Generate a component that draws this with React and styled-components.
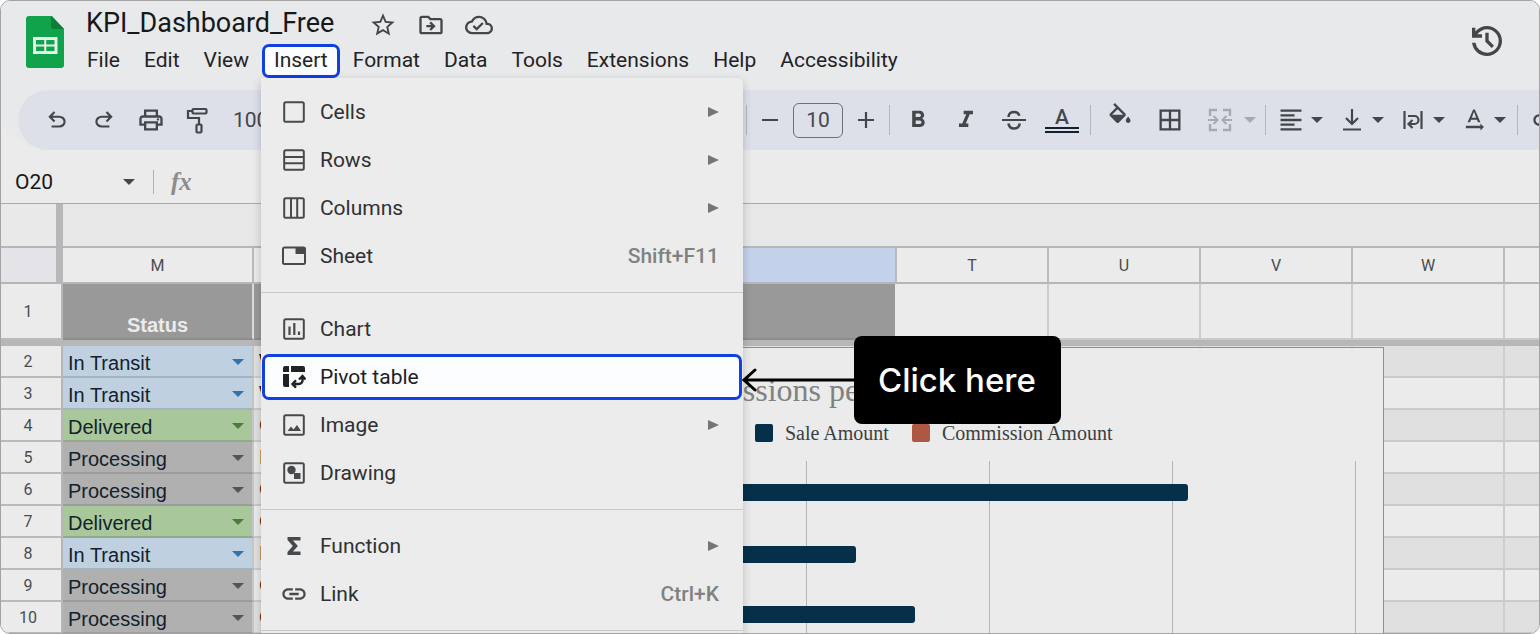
import React from 'react';
import styled, { createGlobalStyle, css } from 'styled-components';
import {
  MdStarBorder,
  MdOutlineDriveFileMove,
  MdOutlineCloudDone,
  MdOutlinePrint,
  MdFormatBold,
  MdFormatItalic,
  MdBorderAll,
  MdFormatAlignLeft,
  MdTextRotationNone,
  MdLink,
} from 'react-icons/md';

const MENUS = ['File', 'Edit', 'View', 'Insert', 'Format', 'Data', 'Tools', 'Extensions', 'Help', 'Accessibility'];

const ROWS = [
  { status: 'In Transit', next: 'W' },
  { status: 'In Transit', next: 'W' },
  { status: 'Delivered', next: 'C' },
  { status: 'Processing', next: 'F' },
  { status: 'Processing', next: 'C' },
  { status: 'Delivered', next: 'C' },
  { status: 'In Transit', next: 'L' },
  { status: 'Processing', next: 'C' },
  { status: 'Processing', next: 'C' },
];

const STATUS_COLORS = {
  'In Transit': { fill: '#bfd1e0', line: '#a5b3bf', arrow: '#2f72ad' },
  Delivered: { fill: '#a8c89c', line: '#94a88c', arrow: '#4c7a3c' },
  Processing: { fill: '#b0b0b0', line: '#9c9c9c', arrow: '#545454' },
};

const SALES = [
  { top: 23, length: 888 },
  { top: 85, length: 556 },
  { top: 145, length: 615 },
];

const GRID_LINES = [506, 689, 872, 1055];

/* icons */

const Icon = ({ w = 28, h = w, box = `0 0 ${w} ${h}`, children }) => (
  <svg width={w} height={h} viewBox={box} fill="none" stroke="currentColor" strokeWidth="2" aria-hidden="true">
    {children}
  </svg>
);

const SheetsLogo = () => (
  <svg width="38" height="52" viewBox="0 0 38 52" aria-hidden="true">
    <path d="M3 0h23l12 13v36a3 3 0 0 1-3 3H3a3 3 0 0 1-3-3V3a3 3 0 0 1 3-3z" fill="#10a34b" />
    <path d="M25 0l13 13H28a3 3 0 0 1-3-3z" fill="#0b7f38" />
    <path d="M8.500 22.500h21.500v14h-21.500z" fill="none" stroke="#e8f0ea" strokeWidth="3" />
    <path d="M19.250 22v15M8 29.500h22.500" fill="none" stroke="#e8f0ea" strokeWidth="2" />
  </svg>
);

const UndoIcon = () => (
  <Icon w={26} box="0 0 24 24">
    <path fill="currentColor" stroke="none" d="M7 19v-2h7.100q1.575 0 2.738-1T18 13.500 16.838 11 14.100 10H7.800l2.600 2.600L9 14 4 9l5-5 1.400 1.400L7.800 8h6.300q2.425 0 4.163 1.575T20 13.500t-1.737 3.925T14.100 19z" />
  </Icon>
);

const RedoIcon = () => (
  <Icon w={26} box="0 0 24 24">
    <path fill="currentColor" stroke="none" transform="translate(24 0) scale(-1 1)" d="M7 19v-2h7.100q1.575 0 2.738-1T18 13.500 16.838 11 14.100 10H7.800l2.600 2.600L9 14 4 9l5-5 1.400 1.400L7.800 8h6.300q2.425 0 4.163 1.575T20 13.500t-1.737 3.925T14.100 19z" />
  </Icon>
);

const HistoryIcon = () => (
  <Icon w={40} box="0 0 24 24">
    <path fill="currentColor" stroke="none" d="M12 21q-3.450 0-6.012-2.287T3.050 13H5.100q.35 2.600 2.313 4.300T12 19q2.925 0 4.963-2.037T19 12t-2.037-4.963T12 5q-1.725 0-3.225.8T6.250 8H9v2H3V4h2v2.350q1.275-1.600 3.113-2.475T12 3q1.875 0 3.513.713t2.850 1.924 1.925 2.850T21 12t-.712 3.513-1.925 2.850-2.850 1.925T12 21m2.800-4.800L11 12.400V7h2v4.600l3.200 3.200z" />
  </Icon>
);

const PaintIcon = () => (
  <Icon>
    <rect x="8.500" y="3" width="14" height="4.500" rx="1" strokeWidth="2.200" />
    <path d="M8 5H4v7h11v6" strokeWidth="2.200" />
    <rect x="12.500" y="18.500" width="5" height="8" rx="1" strokeWidth="2.200" />
  </Icon>
);

const MinusIcon = () => (
  <Icon w={16}>
    <path d="M0 8h16" strokeWidth="2.200" />
  </Icon>
);

const PlusIcon = () => (
  <Icon w={16}>
    <path d="M0 8h16M8 0v16" strokeWidth="2.200" />
  </Icon>
);

const StrikeIcon = () => (
  <Icon w={24} h={22}>
    <path d="M0 11h24" strokeWidth="2.200" />
    <path d="M6.500 8C6.500 4.500 9 3 12 3s4.800 1.500 5.300 3.800M6.500 14.500C7 18 9 19.500 12 19.500s5.800-1.600 5.500-5" strokeWidth="2.600" />
  </Icon>
);

const FillIcon = () => (
  <Icon w={28} h={34} box="0 0 24 29">
    <path fill="currentColor" stroke="none" d="M16.560 8.940 7.620 0 6.210 1.410l2.380 2.380-5.150 5.150a1.490 1.490 0 0 0 0 2.120l5.500 5.500c.29.29.68.44 1.060.44s.77-.15 1.060-.44l5.500-5.500c.59-.58.59-1.530 0-2.120zM5.210 10 10 5.210 14.790 10H5.210zM19 11.500s-2 2.170-2 3.500c0 1.100.9 2 2 2s2-.9 2-2c0-1.330-2-3.500-2-3.500z" />
  </Icon>
);

const MergeIcon = () => (
  <Icon>
    <path d="M4 10V4h7M17 4h7v6M4 18v6h7M17 24h7v-6" strokeWidth="2.400" />
    <path d="M2 14h9M7.500 10l4 4-4 4M26 14h-9M20.500 10l-4 4 4 4" />
  </Icon>
);

const BottomIcon = () => (
  <Icon>
    <path d="M14 3v14M8 12l6 6 6-6M5 23.500h18" strokeWidth="2.200" />
  </Icon>
);

const WrapIcon = () => (
  <Icon>
    <path d="M5.500 5v18M22.500 5v18" strokeWidth="2.200" />
    <path d="M9 10h6.500a4 4 0 0 1 0 8H10M13.500 14l-4 4 4 4" strokeWidth="2.200" />
  </Icon>
);

const Caret = ({ size = 12 }) => (
  <svg width={size} height="6" viewBox="0 0 12 6" aria-hidden="true">
    <path d="M0 0h12L6 6z" fill="currentColor" />
  </svg>
);

const SubmenuArrow = () => (
  <svg width="11" height="10" viewBox="0 0 11 10" aria-hidden="true">
    <path d="M0 0l11 5-11 5z" fill="#757575" />
  </svg>
);

const CellsIcon = () => (
  <Icon w={24}>
    <rect x="2.200" y="2.200" width="19.600" height="19.600" rx="1.500" />
  </Icon>
);

const RowsIcon = () => (
  <Icon w={24}>
    <rect x="2.200" y="2.200" width="19.600" height="19.600" rx="1.500" />
    <path d="M2 9h20M2 15.200h20" />
  </Icon>
);

const ColumnsIcon = () => (
  <Icon w={24}>
    <rect x="2.200" y="2.200" width="19.600" height="19.600" rx="1.500" />
    <path d="M9 2v20M15.200 2v20" />
  </Icon>
);

const SheetIcon = () => (
  <Icon w={24}>
    <rect x="1" y="3.500" width="22" height="16.500" rx="1.500" />
    <path d="M13.500 3h9v7h-9z" fill="currentColor" stroke="none" />
  </Icon>
);

const ChartIcon = () => (
  <Icon w={24}>
    <rect x="2.200" y="2.200" width="19.600" height="19.600" rx="1.500" />
    <path d="M7.500 9.500V18M12.300 6v12M17 14.500V18" strokeWidth="2.200" />
  </Icon>
);

const PivotIcon = () => (
  <Icon w={24}>
    <path d="M3 1h4v6H1V3a2 2 0 0 1 2-2zM9 1h12a2 2 0 0 1 2 2v4H9zM1 9h6v13H3a2 2 0 0 1-2-2z" fill="currentColor" stroke="none" />
    <path d="M11 19h6a3.500 3.500 0 0 0 3.500-3.500V12M14 15.200L10.500 19l3.500 3.600M17 14.500l3.500-3.500 3 3.500" strokeWidth="2.400" />
  </Icon>
);

const ImageIcon = () => (
  <Icon w={24}>
    <rect x="2.200" y="2.200" width="19.600" height="19.600" rx="1.500" />
    <path d="M5.500 18l3.500-4.500 2.500 3 3.500-4.500 4 6z" fill="currentColor" stroke="none" />
  </Icon>
);

const DrawingIcon = () => (
  <Icon w={24}>
    <rect x="2.200" y="2.200" width="19.600" height="19.600" rx="1.500" />
    <circle cx="9.500" cy="9" r="4.200" fill="currentColor" stroke="none" />
    <path d="M12 12h6.500v6H12z" fill="currentColor" stroke="none" />
  </Icon>
);

const FunctionIcon = () => (
  <Icon w={24}>
    <path d="M5.500 3h13v3.600h-7.600l5 5.400-5 5.400h7.600V21h-13v-3l5.300-6-5.300-6z" fill="currentColor" stroke="none" />
  </Icon>
);

/* insert menu */

const SECTIONS = [
  [
    { label: 'Cells', icon: <CellsIcon />, submenu: true },
    { label: 'Rows', icon: <RowsIcon />, submenu: true },
    { label: 'Columns', icon: <ColumnsIcon />, submenu: true },
    { label: 'Sheet', icon: <SheetIcon />, shortcut: 'Shift+F11' },
  ],
  [
    { label: 'Chart', icon: <ChartIcon /> },
    { label: 'Pivot table', icon: <PivotIcon />, active: true },
    { label: 'Image', icon: <ImageIcon />, submenu: true },
    { label: 'Drawing', icon: <DrawingIcon /> },
  ],
  [
    { label: 'Function', icon: <FunctionIcon />, submenu: true },
    { label: 'Link', icon: <MdLink size={28} />, shortcut: 'Ctrl+K' },
  ],
];

const ClickHere = () => (
  <Callout>
    <svg width="112" height="26" viewBox="0 0 112 26" fill="none" stroke="#000" strokeWidth="3" aria-hidden="true">
      <path d="M2 13h110M13 3L2 13l11 10" strokeLinecap="round" />
    </svg>
    <CalloutLabel>Click here</CalloutLabel>
  </Callout>
);

const InsertMenu = () => (
  <Dropdown role="menu">
    {SECTIONS.map((items) => (
      <Section key={items[0].label}>
        {items.map((item) => (
          <ItemSlot key={item.label}>
            <MenuItem role="menuitem" $active={item.active}>
              <MenuIcon $active={item.active}>{item.icon}</MenuIcon>
              <MenuLabel>{item.label}</MenuLabel>
              {item.shortcut && <Shortcut>{item.shortcut}</Shortcut>}
              {item.submenu && <SubmenuArrow />}
            </MenuItem>
            {item.active && <ClickHere />}
          </ItemSlot>
        ))}
      </Section>
    ))}
  </Dropdown>
);

const TopBar = () => (
  <Header>
    <SheetsLogo />
    <Titles>
      <TitleRow>
        <Title>KPI_Dashboard_Free</Title>
        <TitleActions>
          <TitleButton aria-label="Star"><MdStarBorder size={28} /></TitleButton>
          <TitleButton aria-label="Move"><MdOutlineDriveFileMove size={28} /></TitleButton>
          <TitleButton aria-label="Saved to Drive"><MdOutlineCloudDone size={28} /></TitleButton>
        </TitleActions>
      </TitleRow>
      <MenuBar>
        {MENUS.map((name) => (
          <MenuSlot key={name}>
            <MenuButton $open={name === 'Insert'}>{name}</MenuButton>
            {name === 'Insert' && <InsertMenu />}
          </MenuSlot>
        ))}
      </MenuBar>
    </Titles>
    <HistoryButton aria-label="Version history"><HistoryIcon /></HistoryButton>
  </Header>
);

const Toolbar = () => (
  <ToolbarWrapper>
    <ToolGroup>
      <Tool $width={47} aria-label="Undo"><UndoIcon /></Tool>
      <Tool $width={47} aria-label="Redo"><RedoIcon /></Tool>
      <Tool $width={47} aria-label="Print"><MdOutlinePrint size={28} /></Tool>
      <Tool $width={47} aria-label="Paint format"><PaintIcon /></Tool>
      <Zoom>100%</Zoom>
    </ToolGroup>
    <Separator />
    <Tool $width={46} aria-label="Decrease font size"><MinusIcon /></Tool>
    <FontSize aria-label="Font size" defaultValue="10" />
    <Tool $width={46} aria-label="Increase font size"><PlusIcon /></Tool>
    <Separator $after={4} />
    <Tool $width={48} aria-label="Bold"><MdFormatBold size={28} /></Tool>
    <Tool $width={48} aria-label="Italic"><MdFormatItalic size={28} /></Tool>
    <Tool $width={48} aria-label="Strikethrough"><StrikeIcon /></Tool>
    <Tool $width={48} aria-label="Text color"><TextColor>A</TextColor></Tool>
    <Separator $before={4} $after={4} />
    <Tool $width={50} aria-label="Fill color"><FillIcon /></Tool>
    <Tool $width={50} aria-label="Borders"><MdBorderAll size={28} /></Tool>
    <DropTool $width={70} $gap={10} $faded aria-label="Merge cells"><MergeIcon /><Caret /></DropTool>
    <Separator />
    <DropTool $width={61} $gap={6} aria-label="Horizontal align"><MdFormatAlignLeft size={28} /><Caret /></DropTool>
    <DropTool $width={61} $gap={6} aria-label="Vertical align"><BottomIcon /><Caret /></DropTool>
    <DropTool $width={61} $gap={6} aria-label="Text wrapping"><WrapIcon /><Caret /></DropTool>
    <DropTool $width={61} $gap={6} aria-label="Text rotation"><MdTextRotationNone size={28} /><Caret /></DropTool>
    <Separator $before={7} $after={7} />
    <Tool $width={40} aria-label="Insert link"><MdLink size={28} /></Tool>
  </ToolbarWrapper>
);

const FormulaBar = () => (
  <FormulaWrapper>
    <NameBox aria-label="Name box" defaultValue="O20" />
    <NameBoxButton aria-label="Named ranges"><Caret /></NameBoxButton>
    <FormulaDivider />
    <Fx>fx</Fx>
    <FormulaInput aria-label="Formula" />
  </FormulaWrapper>
);

const SalesChart = () => (
  <ChartCard>
    <ChartTitle>Sales and Commissions per</ChartTitle>
    <Legend>
      <Swatch $color="#06304a" />
      <LegendText>Sale Amount</LegendText>
      <Swatch $color="#ae5742" />
      <LegendText>Commission Amount</LegendText>
    </Legend>
    <svg width="100%" height="240" aria-hidden="true">
      {GRID_LINES.map((x) => (
        <rect key={x} x={x - 1} y="0" width="1" height="240" fill="#b3b5b6" />
      ))}
      {SALES.map((bar) => (
        <rect key={bar.top} x="-4" y={bar.top} width={bar.length + 3} height="17" rx="3" fill="#06304a" />
      ))}
    </svg>
  </ChartCard>
);

const Grid = () => (
  <GridWrapper>
    <GroupBand><BandCorner /></GroupBand>
    <Sheet>
      <colgroup>
        <Col $width={62} />
        <Col $width={191} />
        <Col $width={191} />
        <Col $width={452} />
        <Col $width={152} />
        <Col $width={152} />
        <Col $width={152} />
        <Col $width={152} />
        <col />
      </colgroup>
      <thead>
        <tr>
          <Corner />
          <ColHead>M</ColHead>
          <ColHead />
          <ColHead $selected />
          <ColHead>T</ColHead>
          <ColHead>U</ColHead>
          <ColHead>V</ColHead>
          <ColHead>W</ColHead>
          <ColHead />
        </tr>
      </thead>
      <tbody>
        <tr>
          <RowHead $tall>1</RowHead>
          <TitleCell>Status</TitleCell>
          <TitleCell />
          <TitleCell $last />
          <Cell />
          <Cell />
          <Cell />
          <Cell />
          <Cell />
        </tr>
        <tr>
          <FreezeLine colSpan={9} />
        </tr>
        {ROWS.map((row, i) => (
          <tr key={i}>
            <RowHead>{i + 2}</RowHead>
            <StatusCell $tone={STATUS_COLORS[row.status]}>
              <StatusInner>
                {row.status}
                <StatusButton aria-label="Change status" $tone={STATUS_COLORS[row.status]}><Caret /></StatusButton>
              </StatusInner>
            </StatusCell>
            <Cell $shaded={i % 2 === 0}>{row.next}</Cell>
            <Cell $shaded={i % 2 === 0} />
            <Cell $shaded={i % 2 === 0} />
            <Cell $shaded={i % 2 === 0} />
            <Cell $shaded={i % 2 === 0} />
            <Cell $shaded={i % 2 === 0} />
            <Cell $shaded={i % 2 === 0} />
          </tr>
        ))}
      </tbody>
    </Sheet>
    <SalesChart />
  </GridWrapper>
);

const App = () => (
  <>
    <GlobalStyle />
    <Window>
      <TopBar />
      <Toolbar />
      <FormulaBar />
      <Grid />
    </Window>
  </>
);

export default App;

const GlobalStyle = createGlobalStyle`
  * {
    box-sizing: border-box;
  }

  body {
    margin: 0;
    background: #fff;
    font-family: Roboto, "Liberation Sans", sans-serif;
    color: #1f2326;
  }

  button, input {
    font: inherit;
    color: inherit;
    margin: 0;
    padding: 0;
    border: 0;
    background: none;
  }

  svg {
    display: block;
    flex: none;
  }
`;

const Window = styled.div`
  display: flex;
  flex-direction: column;
  height: 100vh;
  overflow: hidden;
  border: 1px solid #a3a3a3;
  border-radius: 10px;
  background: #ebebeb;
`;

const Header = styled.header`
  position: relative;
  z-index: 2;
  display: flex;
  flex: none;
  height: 77px;
  padding: 0 32px 0 25px;
  background: #e8e9ea;

  > svg {
    margin-top: 15px;
  }
`;

const Titles = styled.div`
  flex: 1;
  margin-left: 12px;
`;

const TitleRow = styled.div`
  display: flex;
  align-items: center;
  height: 43px;
  padding-left: 10px;
`;

const Title = styled.h1`
  margin: 0;
  font-size: 27px;
  font-weight: 400;
  line-height: 36px;
  color: #16181a;
`;

const TitleActions = styled.div`
  display: flex;
  margin: 4px 0 0 25px;
  color: #43474a;
`;

const TitleButton = styled.button`
  display: flex;
  align-items: center;
  justify-content: center;
  width: 48px;
  height: 28px;
`;

const MenuBar = styled.nav`
  display: flex;
  gap: 2px;
`;

const MenuSlot = styled.div`
  position: relative;
`;

const MenuButton = styled.button`
  height: 34px;
  padding: 0 ${(p) => (p.$open ? 9 : 8)}px 2px;
  border: 3px solid ${(p) => (p.$open ? '#1240e0' : 'transparent')};
  border-radius: 7px;
  background: ${(p) => (p.$open ? '#fcfdfe' : 'transparent')};
  font-size: 21px;
  line-height: 26px;
`;

const HistoryButton = styled.button`
  align-self: flex-start;
  margin-top: 20px;
  color: #43474a;
`;

const Dropdown = styled.div`
  position: absolute;
  top: 34px;
  left: -1px;
  width: 482px;
  padding-top: 10px;
  border-radius: 0 5px 5px 5px;
  background: #ececec;
  box-shadow: 0 3px 10px rgba(0, 0, 0, 0.2);
`;

const Section = styled.div`
  padding-bottom: 12px;
  border-bottom: 1px solid #c6c9c9;

  & + & {
    padding-top: 12px;
  }

  &:last-child {
    padding-bottom: 20px;
    border-bottom: 0;
    background: linear-gradient(#c6c9c9, #c6c9c9) 0 calc(100% - 7px) / 100% 1px no-repeat;
  }
`;

const ItemSlot = styled.div`
  position: relative;
  padding: 1px;
`;

const MenuItem = styled.button`
  display: flex;
  align-items: center;
  width: 100%;
  height: 46px;
  padding: 0 20px 0 15px;
  border: 3px solid transparent;
  border-radius: 7px;
  font-size: 21px;
  color: #2f3133;

  ${(p) => p.$active && css`
    border-color: #1240e0;
    background: #fcfdfe;
    color: #202224;
  `}
`;

const MenuIcon = styled.span`
  display: flex;
  justify-content: center;
  width: 28px;
  margin-right: 12px;
  color: ${(p) => (p.$active ? '#202224' : '#474a4c')};
`;

const MenuLabel = styled.span`
  flex: 1;
  text-align: left;
`;

const Shortcut = styled.span`
  font-weight: 500;
  color: #808282;
`;

const Callout = styled.div`
  position: absolute;
  top: -17px;
  left: 481px;
  display: flex;
  align-items: center;
`;

const CalloutLabel = styled.div`
  padding: 22px 25px 22px 24px;
  border-radius: 8px;
  background: #000;
  color: #fff;
  font-family: Inter, "Liberation Sans", sans-serif;
  font-size: 33px;
  font-weight: 500;
  line-height: 44px;
  white-space: nowrap;
`;

const ToolbarWrapper = styled.div`
  display: flex;
  align-items: center;
  flex: none;
  height: 60px;
  margin: 12px 0 0 17px;
  padding-left: 15px;
  border-radius: 30px 0 0 30px;
  background: #dde0e9;
  color: #43474a;
  box-shadow: 0 -24px 0 24px #e8e9ea;
`;

const ToolGroup = styled.div`
  display: flex;
  flex: none;
  width: 713px;
`;

const Tool = styled.button`
  display: flex;
  align-items: center;
  justify-content: center;
  flex: none;
  width: ${(p) => p.$width}px;
  height: 40px;
`;

const DropTool = styled(Tool)`
  justify-content: flex-start;
  gap: ${(p) => p.$gap}px;
  padding-left: 11px;
  color: ${(p) => (p.$faded ? '#a6a9ae' : 'inherit')};
`;

const Zoom = styled.button`
  padding-left: 12px;
  font-size: 21px;
`;

const Separator = styled.span`
  flex: none;
  width: 1px;
  height: 30px;
  margin-left: ${(p) => p.$before || 0}px;
  margin-right: ${(p) => p.$after || 0}px;
  background: #b4b7bd;
`;

const FontSize = styled.input`
  flex: none;
  width: 50px;
  height: 35px;
  border: 1px solid #6c7075;
  border-radius: 6px;
  font-size: 21px;
  text-align: center;
`;

const TextColor = styled.span`
  width: 34px;
  height: 26px;
  border-bottom: 6px double #14202c;
  font-size: 21px;
  font-weight: 500;
  line-height: 20px;
`;

const FormulaWrapper = styled.div`
  position: relative;
  display: flex;
  align-items: center;
  flex: none;
  height: 54px;
  padding: 10px 0 0 14px;
  border-bottom: 1px solid #a9abab;
  background: #ebebeb;
`;

const NameBox = styled.input`
  width: 96px;
  font-size: 21px;
  color: #16181a;
`;

const NameBoxButton = styled.button`
  display: flex;
  align-items: center;
  justify-content: center;
  width: 36px;
  height: 24px;
  color: #43474a;
`;

const FormulaDivider = styled.span`
  width: 1px;
  height: 24px;
  margin: 0 17px 0 6px;
  background: #b0b2b2;
`;

const Fx = styled.span`
  font-family: "Liberation Serif", serif;
  font-size: 25px;
  font-style: italic;
  font-weight: 700;
  line-height: 24px;
  color: #8b8d8e;
`;

const FormulaInput = styled.input`
  flex: 1;
`;

const GridWrapper = styled.div`
  position: relative;
  flex: 1;
`;

const GroupBand = styled.div`
  height: 44px;
  border-bottom: 2px solid #b5b6b7;
  background: #e7e7e7;
`;

const BandCorner = styled.div`
  width: 62px;
  height: 42px;
  border-right: 7px solid #b7b7b7;
  background: #e9e9e9;
`;

const Sheet = styled.table`
  width: 100%;
  table-layout: fixed;
  border-collapse: separate;
  border-spacing: 0;

  th, td {
    padding: 0;
  }
`;

const Col = styled.col`
  width: ${(p) => p.$width}px;
`;

const Corner = styled.td`
  border-right: 7px solid #b7b7b7;
  border-bottom: 2px solid #b5b6b7;
  background: #e4e4e8;
`;

const ColHead = styled.th`
  height: 36px;
  border-right: 2px solid #b9babb;
  border-bottom: 2px solid #b5b6b7;
  background: ${(p) => (p.$selected ? '#c3d2ea' : '#ebebeb')};
  font-size: 16px;
  font-weight: 400;
  color: #4a4d50;

  &:last-child {
    border-right: 0;
  }
`;

const RowHead = styled.th`
  height: ${(p) => (p.$tall ? 56 : 32)}px;
  border-right: 2px solid #b5b6b7;
  border-bottom: 2px solid #b9babb;
  background: #ebebeb;
  font-size: 16px;
  font-weight: 400;
  color: #4a4d50;

  && {
    padding-right: 6px;
  }
`;

const Cell = styled.td`
  border-right: 2px solid #cdcdcd;
  border-bottom: 2px solid #cacaca;
  background: ${(p) => (p.$shaded ? '#e0e0e0' : '#ebebeb')};
  font-family: "Liberation Sans", Arial, sans-serif;
  font-size: 20px;

  && {
    padding-left: 5px;
  }

  &:last-child {
    border-right: 0;
  }
`;

const TitleCell = styled.th`
  border-right: 2px solid ${(p) => (p.$last ? '#ebebeb' : '#dcdcdc')};
  border-bottom: 2px solid #8c8c8c;
  background: #999;
  font-family: "Liberation Sans", Arial, sans-serif;
  font-size: 20px;
  line-height: 26px;
  font-weight: 700;
  color: #ebebeb;
  vertical-align: bottom;
`;

const FreezeLine = styled.td`
  height: 6px;
  background: #b7b7b7;
`;

const StatusCell = styled.td`
  border-right: 2px solid #c4c6c8;
  border-bottom: 2px solid ${(p) => p.$tone.line};
  background: ${(p) => p.$tone.fill};
  font-family: "Liberation Sans", Arial, sans-serif;
  font-size: 20px;
  line-height: 26px;
  color: #14202c;
`;

const StatusInner = styled.div`
  display: flex;
  align-items: center;
  justify-content: space-between;
  padding: 4px 8px 0 5px;
`;

const StatusButton = styled.button`
  padding-bottom: 3px;
  color: ${(p) => p.$tone.arrow};
`;

const ChartCard = styled.div`
  position: absolute;
  top: 143px;
  left: 299px;
  width: 1084px;
  height: 420px;
  border: 1px solid #8d8f90;
  background: #ebebeb;
  font-family: "Liberation Serif", serif;
`;

const ChartTitle = styled.h2`
  margin: 0;
  padding: 24px 0 0 216px;
  font-size: 32px;
  font-weight: 400;
  line-height: 36px;
  color: #808282;
`;

const Legend = styled.div`
  display: flex;
  align-items: center;
  gap: 12px;
  height: 50px;
  margin-bottom: 3px;
  padding-left: 454px;
`;

const Swatch = styled.span`
  width: 18px;
  height: 18px;
  border-radius: 2px;
  background: ${(p) => p.$color};
`;

const LegendText = styled.span`
  margin-right: 11px;
  font-size: 20px;
  line-height: 24px;
  color: #3b3f42;
`;
